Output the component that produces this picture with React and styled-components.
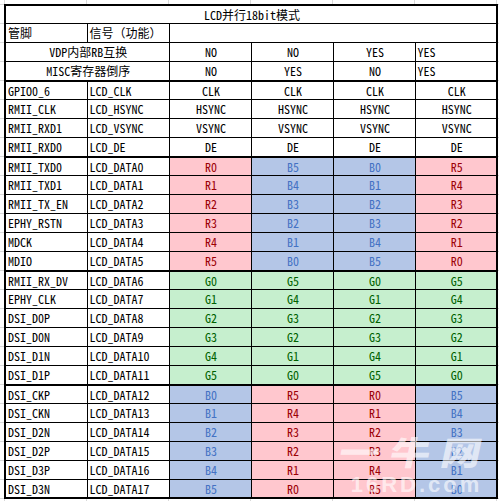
import React from 'react';
import styled, { createGlobalStyle } from 'styled-components';

const GlobalStyle = createGlobalStyle`
  html, body {
    margin: 0;
    padding: 0;
    background-color: #ffffff;
  }
  body {
    font-family: "Noto Sans Mono CJK SC", "Liberation Mono", "Noto Sans CJK SC", monospace;
  }
`;

const palette = {
  R: { bg: '#ffc7ce', fg: '#9c0006' },
  G: { bg: '#c6efce', fg: '#006100' },
  B: { bg: '#b4c6e7', fg: '#4472c4' },
};

const syncRows = [
  ['GPIO0_6', 'LCD_CLK', 'CLK'],
  ['RMII_CLK', 'LCD_HSYNC', 'HSYNC'],
  ['RMII_RXD1', 'LCD_VSYNC', 'VSYNC'],
  ['RMII_RXD0', 'LCD_DE', 'DE'],
];

const dataGroups = [
  [
    ['RMII_TXD0', 'LCD_DATA0', 'R0', 'B5', 'B0', 'R5'],
    ['RMII_TXD1', 'LCD_DATA1', 'R1', 'B4', 'B1', 'R4'],
    ['RMII_TX_EN', 'LCD_DATA2', 'R2', 'B3', 'B2', 'R3'],
    ['EPHY_RSTN', 'LCD_DATA3', 'R3', 'B2', 'B3', 'R2'],
    ['MDCK', 'LCD_DATA4', 'R4', 'B1', 'B4', 'R1'],
    ['MDIO', 'LCD_DATA5', 'R5', 'B0', 'B5', 'R0'],
  ],
  [
    ['RMII_RX_DV', 'LCD_DATA6', 'G0', 'G5', 'G0', 'G5'],
    ['EPHY_CLK', 'LCD_DATA7', 'G1', 'G4', 'G1', 'G4'],
    ['DSI_D0P', 'LCD_DATA8', 'G2', 'G3', 'G2', 'G3'],
    ['DSI_D0N', 'LCD_DATA9', 'G3', 'G2', 'G3', 'G2'],
    ['DSI_D1N', 'LCD_DATA10', 'G4', 'G1', 'G4', 'G1'],
    ['DSI_D1P', 'LCD_DATA11', 'G5', 'G0', 'G5', 'G0'],
  ],
  [
    ['DSI_CKP', 'LCD_DATA12', 'B0', 'R5', 'R0', 'B5'],
    ['DSI_CKN', 'LCD_DATA13', 'B1', 'R4', 'R1', 'B4'],
    ['DSI_D2N', 'LCD_DATA14', 'B2', 'R3', 'R2', 'B3'],
    ['DSI_D2P', 'LCD_DATA15', 'B3', 'R2', 'R3', 'B2'],
    ['DSI_D3P', 'LCD_DATA16', 'B4', 'R1', 'R4', 'B1'],
    ['DSI_D3N', 'LCD_DATA17', 'B5', 'R0', 'R5', 'B0'],
  ],
];

export default function App() {
  return (
    <>
      <GlobalStyle />
      <Sheet>
        <Table>
          <colgroup>
            {[0, 1, 2, 3, 4, 5].map(i => (
              <col key={i} style={{ width: 82 }} />
            ))}
          </colgroup>
          <Head>
            <tr>
              <Cell colSpan={6} align='center'>LCD并行18bit模式</Cell>
            </tr>
            <tr>
              <Cell>管脚</Cell>
              <Cell>信号（功能）</Cell>
              <Cell colSpan={4} />
            </tr>
            <tr>
              <Cell colSpan={2} align='center'>VDP内部RB互换</Cell>
              <Cell align='center'>NO</Cell>
              <Cell align='center'>NO</Cell>
              <Cell align='center'>YES</Cell>
              <Cell>YES</Cell>
            </tr>
            <tr>
              <Cell colSpan={2} align='center'>MISC寄存器倒序</Cell>
              <Cell align='center'>NO</Cell>
              <Cell align='center'>YES</Cell>
              <Cell align='center'>NO</Cell>
              <Cell>YES</Cell>
            </tr>
          </Head>
          <Group>
            {syncRows.map(([pin, signal, value]) => (
              <tr key={pin}>
                <Cell>{pin}</Cell>
                <Cell>{signal}</Cell>
                {[0, 1, 2, 3].map(i => (
                  <Cell key={i} align='center'>{value}</Cell>
                ))}
              </tr>
            ))}
          </Group>
          {dataGroups.map((rows, g) => (
            <Group key={g}>
              {rows.map(([pin, signal, ...bits]) => (
                <tr key={pin}>
                  <Cell>{pin}</Cell>
                  <Cell>{signal}</Cell>
                  {bits.map((bit, i) => (
                    <Cell key={i} align='center' tone={bit[0]}>{bit}</Cell>
                  ))}
                </tr>
              ))}
            </Group>
          ))}
        </Table>
        <Watermark>
          <MarkTitle>一牛网</MarkTitle>
          <MarkSite>16RD.com</MarkSite>
        </Watermark>
      </Sheet>
    </>
  );
}

const Sheet = styled.div`
  position: relative;
  width: 499px;
  height: 501px;
  padding: 4px 0 0 4px;
  box-sizing: border-box;
  overflow: hidden;
  background-image:
    linear-gradient(to right, #d9d9d9 1px, transparent 1px),
    linear-gradient(to bottom, #d9d9d9 1px, transparent 1px);
  background-size: 82px 19px;
  background-position: 4px 4px;
`;

const Table = styled.table`
  table-layout: fixed;
  width: 493px;
  border-collapse: collapse;
  border: 2px solid #000;
  background-color: #ffffff;
  font-size: 12px;
  color: #000;

  tbody:last-child tr:last-child td {
    height: 17px;
    line-height: 17px;
  }
`;

const Head = styled.tbody`
  tr:first-child td {
    height: 17px;
    line-height: 17px;
  }
`;

const Group = styled.tbody`
  border-top: 2px solid #000;

  tr:first-child td {
    height: 17px;
    line-height: 17px;
  }
`;

const Cell = styled.td`
  height: 18px;
  padding: 0 0 0 2px;
  border: 1px solid #000;
  line-height: 18px;
  white-space: nowrap;
  overflow: hidden;
  text-align: ${props => props.align || 'left'};
  background-color: ${props => (props.tone ? palette[props.tone].bg : '#ffffff')};
  color: ${props => (props.tone ? palette[props.tone].fg : '#000000')};
`;

const Watermark = styled.div`
  position: absolute;
  left: 340px;
  top: 430px;
  display: flex;
  flex-direction: column;
  align-items: center;
  pointer-events: none;
  color: rgba(255, 255, 255, 0.62);
`;

const MarkTitle = styled.div`
  font-family: "Noto Sans CJK SC", sans-serif;
  font-size: 40px;
  font-weight: 900;
  line-height: 42px;
  letter-spacing: 11px;
  transform: skewX(-12deg) scaleY(0.82);
`;

const MarkSite = styled.div`
  font-family: "Liberation Sans", sans-serif;
  font-size: 22px;
  font-weight: 700;
  line-height: 22px;
  letter-spacing: 3px;
  margin-top: 2px;
`;
